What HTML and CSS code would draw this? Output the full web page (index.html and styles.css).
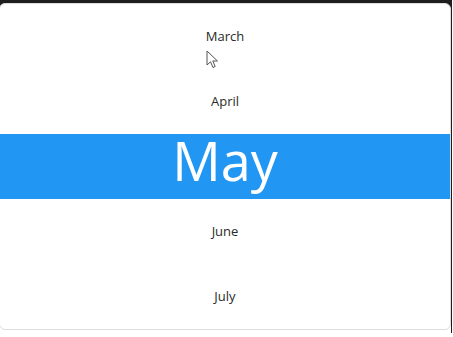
FILE: index.html
```html
<!DOCTYPE html>
<html>
<head>
<meta charset="utf-8">
<link rel="stylesheet" href="styles.css">
</head>
<body>
<div class="frame">
  <div class="picker">
    <div class="item">March</div>
    <div class="item">April</div>
    <div class="item selected">May</div>
    <div class="item">June</div>
    <div class="item">July</div>
  </div>
  <svg class="cursor" width="14" height="20" viewBox="0 0 14 20">
    <path d="M1 1 L1 15 L4.5 11.8 L7 17.5 L9.2 16.5 L6.8 11 L11.5 11 Z" fill="#fff" stroke="#555" stroke-width="1" stroke-linejoin="round"/>
  </svg>
</div>
</body>
</html>
```
FILE: styles.css
```css
html, body {
  margin: 0;
  padding: 0;
  background: #ffffff;
}
.frame {
  position: relative;
  width: 452px;
  height: 333px;
  background: linear-gradient(#1e1e1e 0 12px, #ffffff 12px);
  border-top: 2px solid #1e1e1e;
  border-right: 1px solid #1e1e1e;
  box-sizing: border-box;
}
.picker {
  width: 452px;
  height: 327px;
  box-sizing: border-box;
  margin-left: -1px;
  margin-top: 1px;
  background: #ffffff;
  border: 1px solid #dcdcdc;
  border-radius: 6px;
  display: flex;
  flex-direction: column;
  overflow: hidden;
  font-family: "Open Sans", "Liberation Sans", sans-serif;
}
.item {
  height: 65px;
  flex: 0 0 65px;
  display: flex;
  align-items: center;
  justify-content: center;
  font-size: 13px;
  color: #2a2a2a;
  padding-bottom: 2px;
  box-sizing: border-box;
}
.item.selected {
  background: #2196f3;
  color: #ffffff;
  font-size: 54px;
  line-height: 1;
  padding-bottom: 14px;
}
.cursor {
  position: absolute;
  left: 206px;
  top: 48px;
}
```
